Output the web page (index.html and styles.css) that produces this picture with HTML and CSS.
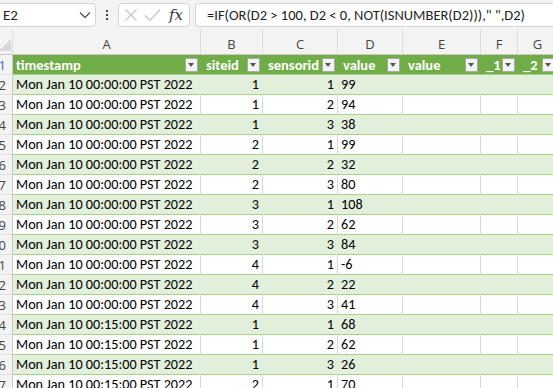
FILE: index.html
```html
<!DOCTYPE html>
<html>
<head>
<meta charset="utf-8">
<link rel="stylesheet" href="styles.css">
</head>
<body>
<div class="app">
  <div class="toolbar">
    <div class="namebox"><span class="name">E2</span>
      <svg class="chev" width="12" height="8" viewBox="0 0 12 8"><path d="M1 1.5 L6 6.5 L11 1.5" fill="none" stroke="#555" stroke-width="1.3"/></svg>
    </div>
    <div class="dots"><i></i><i></i><i></i></div>
    <div class="fxbox">
      <svg width="14" height="14" viewBox="0 0 14 14"><path d="M1.5 1.5 L12.5 12.5 M12.5 1.5 L1.5 12.5" stroke="#c4c4c4" stroke-width="1.2" fill="none"/></svg>
      <svg width="17" height="14" viewBox="0 0 17 14"><path d="M1 7.5 L6 12.5 L16 1.5" stroke="#c4c4c4" stroke-width="1.2" fill="none"/></svg>
      <span class="fx">fx</span>
    </div>
    <div class="formula">=IF(OR(D2 &gt; 100, D2 &lt; 0, NOT(ISNUMBER(D2))),&quot; &quot;,D2)</div>
  </div>
  <div class="grid">
    <div class="row colhdr">
      <div class="corner"><span class="tri"></span></div>
      <div class="ch">A</div><div class="ch">B</div><div class="ch">C</div><div class="ch">D</div><div class="ch">E</div><div class="ch">F</div><div class="ch">G</div>
    </div>
    <div class="row thead">
      <div class="rh rh-sel"><span>1</span></div>
      <div class="th"><span>timestamp</span><b class="dd"></b></div>
      <div class="th"><span>siteid</span><b class="dd"></b></div>
      <div class="th"><span>sensorid</span><b class="dd"></b></div>
      <div class="th"><span>value</span><b class="dd"></b></div>
      <div class="th"><span>value</span><b class="dd"></b></div>
      <div class="th"><span>_1</span><b class="dd"></b></div>
      <div class="th"><span>_2</span><b class="dd"></b></div>
    </div>
    <div class="row band"><div class="rh"><span>2</span></div><div class="c">Mon Jan 10 00:00:00 PST 2022</div><div class="c n">1</div><div class="c n">1</div><div class="c">99</div><div class="c"></div><div class="c"></div><div class="c"></div></div>
    <div class="row"><div class="rh"><span>3</span></div><div class="c">Mon Jan 10 00:00:00 PST 2022</div><div class="c n">1</div><div class="c n">2</div><div class="c">94</div><div class="c"></div><div class="c"></div><div class="c"></div></div>
    <div class="row band"><div class="rh"><span>4</span></div><div class="c">Mon Jan 10 00:00:00 PST 2022</div><div class="c n">1</div><div class="c n">3</div><div class="c">38</div><div class="c"></div><div class="c"></div><div class="c"></div></div>
    <div class="row"><div class="rh"><span>5</span></div><div class="c">Mon Jan 10 00:00:00 PST 2022</div><div class="c n">2</div><div class="c n">1</div><div class="c">99</div><div class="c"></div><div class="c"></div><div class="c"></div></div>
    <div class="row band"><div class="rh"><span>6</span></div><div class="c">Mon Jan 10 00:00:00 PST 2022</div><div class="c n">2</div><div class="c n">2</div><div class="c">32</div><div class="c"></div><div class="c"></div><div class="c"></div></div>
    <div class="row"><div class="rh"><span>7</span></div><div class="c">Mon Jan 10 00:00:00 PST 2022</div><div class="c n">2</div><div class="c n">3</div><div class="c">80</div><div class="c"></div><div class="c"></div><div class="c"></div></div>
    <div class="row band"><div class="rh"><span>8</span></div><div class="c">Mon Jan 10 00:00:00 PST 2022</div><div class="c n">3</div><div class="c n">1</div><div class="c">108</div><div class="c"></div><div class="c"></div><div class="c"></div></div>
    <div class="row"><div class="rh"><span>9</span></div><div class="c">Mon Jan 10 00:00:00 PST 2022</div><div class="c n">3</div><div class="c n">2</div><div class="c">62</div><div class="c"></div><div class="c"></div><div class="c"></div></div>
    <div class="row band"><div class="rh"><span>10</span></div><div class="c">Mon Jan 10 00:00:00 PST 2022</div><div class="c n">3</div><div class="c n">3</div><div class="c">84</div><div class="c"></div><div class="c"></div><div class="c"></div></div>
    <div class="row"><div class="rh"><span>11</span></div><div class="c">Mon Jan 10 00:00:00 PST 2022</div><div class="c n">4</div><div class="c n">1</div><div class="c">-6</div><div class="c"></div><div class="c"></div><div class="c"></div></div>
    <div class="row band"><div class="rh"><span>12</span></div><div class="c">Mon Jan 10 00:00:00 PST 2022</div><div class="c n">4</div><div class="c n">2</div><div class="c">22</div><div class="c"></div><div class="c"></div><div class="c"></div></div>
    <div class="row"><div class="rh"><span>13</span></div><div class="c">Mon Jan 10 00:00:00 PST 2022</div><div class="c n">4</div><div class="c n">3</div><div class="c">41</div><div class="c"></div><div class="c"></div><div class="c"></div></div>
    <div class="row band"><div class="rh"><span>14</span></div><div class="c">Mon Jan 10 00:15:00 PST 2022</div><div class="c n">1</div><div class="c n">1</div><div class="c">68</div><div class="c"></div><div class="c"></div><div class="c"></div></div>
    <div class="row"><div class="rh"><span>15</span></div><div class="c">Mon Jan 10 00:15:00 PST 2022</div><div class="c n">1</div><div class="c n">2</div><div class="c">62</div><div class="c"></div><div class="c"></div><div class="c"></div></div>
    <div class="row band"><div class="rh"><span>16</span></div><div class="c">Mon Jan 10 00:15:00 PST 2022</div><div class="c n">1</div><div class="c n">3</div><div class="c">26</div><div class="c"></div><div class="c"></div><div class="c"></div></div>
    <div class="row"><div class="rh"><span>17</span></div><div class="c">Mon Jan 10 00:15:00 PST 2022</div><div class="c n">2</div><div class="c n">1</div><div class="c">70</div><div class="c"></div><div class="c"></div><div class="c"></div></div>
  </div>
</div>
</body>
</html>
```

FILE: styles.css
```css
* { box-sizing: border-box; margin: 0; padding: 0; }
html, body { width: 553px; height: 388px; overflow: hidden; background: #fff; }
body { font-family: Carlito, Calibri, Lato, "Liberation Sans", sans-serif; color: #000; }
.app { width: 553px; height: 388px; overflow: hidden; }

.toolbar {
  height: 29px; background: #f3f3f3;
  display: flex; align-items: flex-start; padding-top: 3px;
  white-space: nowrap;
}
.namebox {
  margin-left: -4px; width: 100px; height: 24px;
  background: #fff; border: 1px solid #d4d4d4; border-radius: 4px;
  display: flex; align-items: center; justify-content: space-between;
  padding: 0 4px 0 6px;
  font-size: 15px; color: #222;
}
.dots { width: 22px; height: 24px; display: flex; flex-direction: column; align-items: center; justify-content: center; gap: 2px; }
.dots i { display: block; width: 2px; height: 2px; background: #444; }
.fxbox {
  width: 72px; height: 24px; background: #fff; border: 1px solid #d4d4d4; border-radius: 4px;
  display: flex; align-items: center; gap: 6px; padding-left: 5px;
}
.fx { font-family: "DejaVu Serif", "Liberation Serif", serif; font-style: italic; font-size: 15px; color: #333; margin-left: 2px; }
.formula {
  margin-left: 5px; flex: 1; height: 24px; background: #fff; border: 1px solid #d4d4d4; border-radius: 4px 0 0 4px; border-right: none;
  padding-left: 11px; font-size: 14.5px; line-height: 22px; color: #222;
}

.row {
  display: grid;
  grid-template-columns: 13px 188px 62px 75px 65px 78px 37px 40px;
  height: 20px;
}
.colhdr { height: 26px; background: #f3f3f3; border-bottom: 1px solid #c8c8c8; }
.corner { position: relative; border-right: 1px solid #e0e0e0; }
.tri {
  position: absolute; right: 1px; bottom: 3px; width: 0; height: 0;
  border-left: 12px solid transparent; border-bottom: 12px solid #d8d8d8;
}
.ch {
  border-right: 1px solid #dcdcdc;
  display: flex; align-items: center; justify-content: center;
  font-family: "Open Sans", "Noto Sans", sans-serif; font-size: 13px; color: #444; padding-top: 5px;
}

.rh {
  background: #f3f3f3; border-right: 1px solid #c8c8c8; border-bottom: 1px solid #e0e0e0;
  display: flex; justify-content: flex-end; align-items: center; overflow: hidden;
  font-family: "Open Sans", "Noto Sans", sans-serif; font-size: 13px; color: #444;
  padding-right: 6px;
}
.rh-sel { color: #2f6dc4; }

.thead { background: #70ad47; }
.th {
  display: flex; align-items: center; justify-content: space-between;
  padding: 0 3px 0 3px; color: #fff; font-weight: bold; font-size: 14.5px;
  border-bottom: 1px solid #a9d08e; white-space: nowrap; overflow: hidden;
}
.th:not(:nth-child(2)) { padding-left: 5px; }
.dd {
  flex: none; width: 13px; height: 14px; background: #f4f4f4; border: 1px solid #a8a8a8;
  position: relative;
}
.dd::after {
  content: ""; position: absolute; left: 2px; top: 4px;
  border-left: 3.5px solid transparent; border-right: 3.5px solid transparent; border-top: 4px solid #555;
}

.c {
  font-size: 14.2px; line-height: 19px; padding: 0 3px; white-space: nowrap; overflow: hidden;
  border-right: 1px solid #d9d9d9; border-bottom: 1px solid #a9d08e;
}
.n { text-align: right; }
.band .c { background: #e2efda; border-right-color: #e2efda; }
```
